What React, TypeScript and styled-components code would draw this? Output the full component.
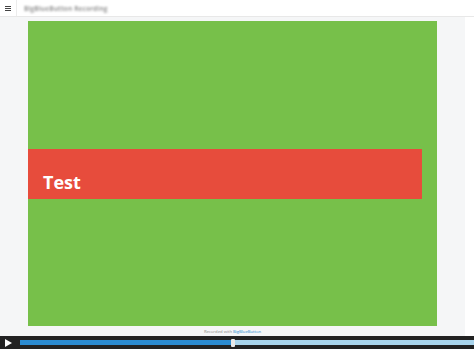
import React from "react";
import styled, { createGlobalStyle } from "styled-components";

const Global = createGlobalStyle`
  html, body { margin: 0; padding: 0; background: #ffffff; }
  #root { width: 474px; height: 349px; overflow: hidden; }
`;

const Page = styled.div`
  width: 474px;
  height: 349px;
  display: flex;
  flex-direction: column;
  font-family: "Open Sans", "DejaVu Sans", sans-serif;
`;

const Header = styled.header`
  height: 16px;
  flex: none;
  display: flex;
  align-items: center;
  background: #ffffff;
  border-bottom: 1px solid #e8e8e8;
`;

const MenuButton = styled.div`
  width: 17px;
  height: 16px;
  display: flex;
  align-items: center;
  justify-content: center;
  border-right: 1px solid #ececec;
  box-sizing: border-box;
`;

const Logo = styled.div`
  margin-left: 7px;
  font-size: 6.5px;
  font-weight: 700;
  color: #9a9a9a;
  letter-spacing: 0.1px;
  filter: blur(0.9px);
  white-space: nowrap;
`;

const Body = styled.div`
  flex: 1;
  display: flex;
  background: #ffffff;
`;

const Stage = styled.main`
  flex: 1;
  display: flex;
  flex-direction: column;
  background: #f5f6f7;
  padding: 4px 0 0 28px;
`;

const Slide = styled.div`
  width: 409px;
  height: 305px;
  background: #77c04a;
  display: flex;
  flex-direction: column;
  padding-top: 128px;
  box-sizing: border-box;
`;

const Banner = styled.div`
  width: 394px;
  height: 50px;
  background: #e74c3c;
  box-sizing: border-box;
  padding: 21px 0 0 15px;
  color: #ffffff;
  font-family: "Open Sans", "Noto Sans", sans-serif;
  font-weight: 700;
  font-size: 18px;
  line-height: 24px;
`;

const Caption = styled.div`
  width: 409px;
  height: 10px;
  display: flex;
  align-items: center;
  justify-content: center;
  font-size: 4.2px;
  color: #8a8a8a;
`;

const CaptionLink = styled.span`
  color: #2a8ad0;
  margin-left: 1px;
`;

const RightStrip = styled.div`
  width: 9px;
  background: #ffffff;
`;

const Controls = styled.div`
  height: 13px;
  flex: none;
  background: #222222;
  display: flex;
  align-items: center;
`;

const PlayButton = styled.div`
  width: 20px;
  display: flex;
  align-items: center;
  justify-content: center;
  padding-right: 3px;
  box-sizing: border-box;
`;

const Track = styled.div`
  flex: 1;
  height: 5px;
  display: flex;
  align-items: center;
  background: #a8d4ec;
`;

const Played = styled.div`
  height: 5px;
  background: #2b8bd0;
`;

const Handle = styled.div`
  width: 4px;
  height: 8px;
  background: #e8e8e8;
  border-radius: 1px;
  flex: none;
`;

export default function App() {
  const progress = 211;
  return (
    <>
      <Global />
      <Page>
        <Header>
          <MenuButton>
            <svg width="6" height="5" viewBox="0 0 6 5">
              <rect x="0" y="0" width="6" height="1" fill="#444" />
              <rect x="0" y="2" width="6" height="1" fill="#444" />
              <rect x="0" y="4" width="6" height="1" fill="#444" />
            </svg>
          </MenuButton>
          <Logo>BigBlueButton Recording</Logo>
        </Header>
        <Body>
          <Stage>
            <Slide>
              <Banner>Test</Banner>
            </Slide>
            <Caption>
              Recorded with <CaptionLink>BigBlueButton</CaptionLink>
            </Caption>
          </Stage>
          <RightStrip />
        </Body>
        <Controls>
          <PlayButton>
            <svg width="7" height="8" viewBox="0 0 7 8">
              <path d="M0 0 L7 4 L0 8 Z" fill="#ffffff" />
            </svg>
          </PlayButton>
          <Track>
            <Played style={{ width: progress }} />
            <Handle />
          </Track>
        </Controls>
      </Page>
    </>
  );
}
